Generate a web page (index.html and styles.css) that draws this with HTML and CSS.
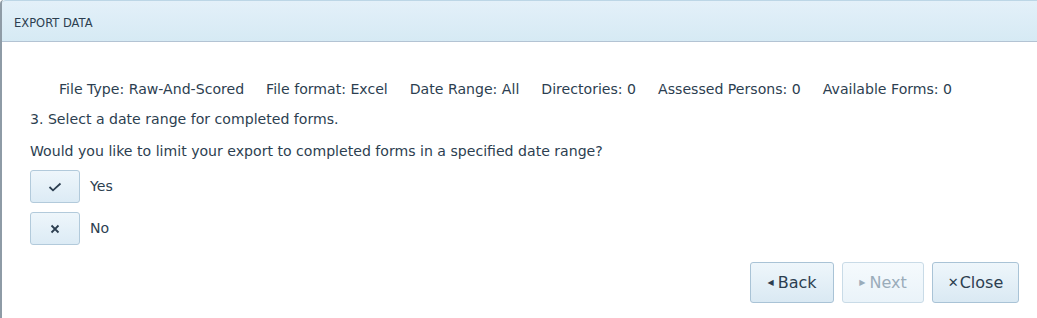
FILE: index.html
```html
<!DOCTYPE html>
<html>
<head>
<meta charset="utf-8">
<link rel="stylesheet" href="styles.css">
</head>
<body>
<div class="dialog">
  <div class="header">EXPORT DATA</div>
  <div class="content">
    <div class="info">
      <span>File Type: Raw-And-Scored</span>
      <span>File format: Excel</span>
      <span>Date Range: All</span>
      <span>Directories: 0</span>
      <span>Assessed Persons: 0</span>
      <span>Available Forms: 0</span>
    </div>
    <div class="step">3. Select a date range for completed forms.</div>
    <div class="question">Would you like to limit your export to completed forms in a specified date range?</div>
    <div class="option">
      <button class="opt-btn" type="button">
        <svg width="14" height="10" viewBox="0 0 14 10"><path d="M1.5 5 L5 8.3 L12.5 1.5" fill="none" stroke="#2c3e50" stroke-width="1.8"/></svg>
      </button>
      <span class="opt-label">Yes</span>
    </div>
    <div class="option">
      <button class="opt-btn" type="button">
        <svg width="10" height="10" viewBox="0 0 10 10"><path d="M1.5 1.5 L8.5 8.5 M8.5 1.5 L1.5 8.5" fill="none" stroke="#2c3e50" stroke-width="1.8"/></svg>
      </button>
      <span class="opt-label">No</span>
    </div>
    <div class="footer">
      <button class="nav-btn back" type="button"><span class="tri">&#9664;</span>Back</button>
      <button class="nav-btn next" type="button" disabled><span class="tri">&#9654;</span>Next</button>
      <button class="nav-btn close" type="button"><span class="x">&#10005;</span>Close</button>
    </div>
  </div>
</div>
</body>
</html>
```
FILE: styles.css
```css
html, body {
  margin: 0;
  padding: 0;
  background: #ffffff;
}
body {
  font-family: "DejaVu Sans", sans-serif;
  color: #2c3e50;
  width: 1037px;
  height: 318px;
  overflow: hidden;
}
.dialog {
  height: 318px;
  border-left: 2px solid #8e9ba6;
  border-top-left-radius: 4px;
  box-sizing: border-box;
  display: flex;
  flex-direction: column;
}
.header {
  height: 42px;
  box-sizing: border-box;
  border-top: 1px solid #bcd6e6;
  border-bottom: 1px solid #b3c3d3;
  background: linear-gradient(#e3f0f9, #d6eaf4);
  display: flex;
  align-items: center;
  padding: 4px 0 0 12px;
  font-size: 11.5px;
  color: #2c3e50;
  border-top-left-radius: 4px;
}
.content {
  padding: 0 18px 0 28px;
  display: flex;
  flex-direction: column;
  flex: 1;
}
.info {
  display: flex;
  gap: 22px;
  padding-left: 29px;
  margin-top: 38px;
  font-size: 14.1px;
  line-height: 18px;
}
.step {
  margin-top: 12px;
  font-size: 14.1px;
  line-height: 18px;
}
.question {
  margin-top: 14px;
  font-size: 14.1px;
  line-height: 18px;
}
.option {
  display: flex;
  align-items: center;
  gap: 10px;
  margin-top: 10px;
}
.option + .option {
  margin-top: 9px;
}
.opt-btn {
  width: 50px;
  height: 33px;
  border: 1px solid #b2cadb;
  border-radius: 3px;
  background: linear-gradient(#eef6fb, #dcebf5);
  display: flex;
  align-items: center;
  justify-content: center;
  padding: 0;
  margin: 0;
}
.opt-label {
  font-size: 14.1px;
  margin-top: -2px;
}
.footer {
  display: flex;
  justify-content: flex-end;
  gap: 8px;
  margin-top: 17px;
}
.nav-btn {
  height: 41px;
  border: 1px solid #a9c3d6;
  border-radius: 3px;
  background: linear-gradient(#eef6fb, #dae9f3);
  font-family: "DejaVu Sans", sans-serif;
  font-size: 16px;
  color: #2c3e50;
  display: flex;
  align-items: center;
  justify-content: center;
  padding: 0;
  margin: 0;
}
.back { width: 84px; }
.next {
  width: 82px;
  color: #9aacba;
  border-color: #c9dbe7;
  background: linear-gradient(#f5fafd, #eaf3f9);
}
.close { width: 87px; }
.tri {
  font-size: 8px;
  margin-right: 4px;
}
.x {
  font-size: 13px;
  margin-right: 1px;
  font-weight: bold;
}
```
